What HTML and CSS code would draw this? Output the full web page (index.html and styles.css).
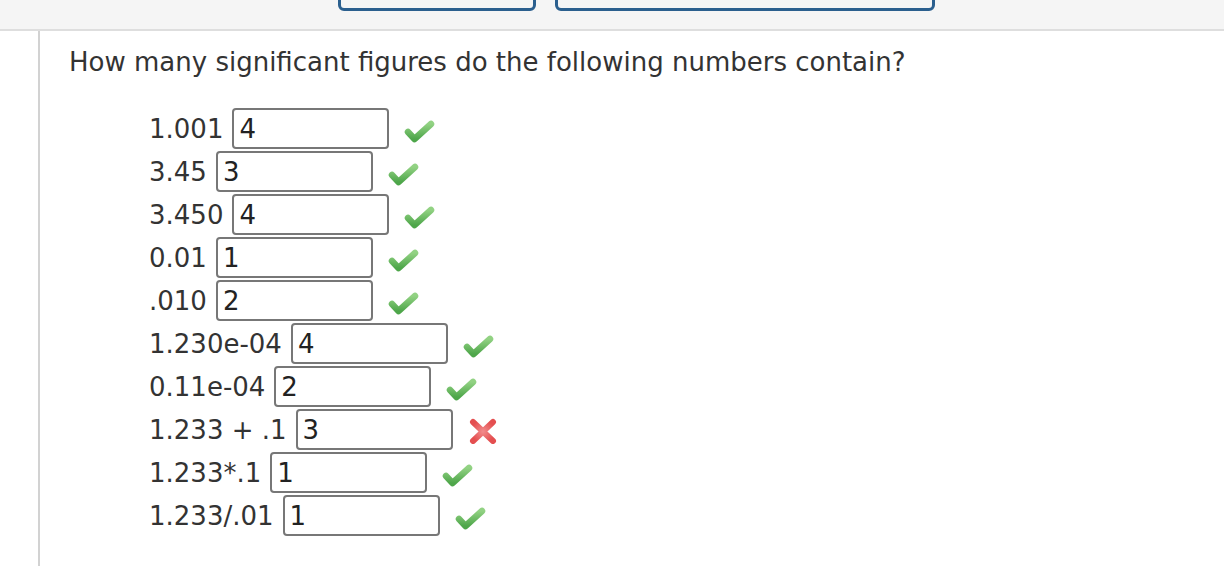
FILE: index.html
```html
<!DOCTYPE html>
<html lang="en">
<head>
  <meta charset="UTF-8">
  <title>Significant Figures</title>
  <link rel="stylesheet" href="styles.css">
</head>
<body>
  <div class="topbar">
    <span class="tab tab-short"></span>
    <span class="tab tab-long"></span>
  </div>

  <div class="main">
    <p class="question">How many significant figures do the following numbers contain?</p>

    <div class="answers">
      <div class="row">
        <span class="label">1.001</span>
        <input type="text" class="answer" value="4">
        <svg class="mark" viewBox="0 0 34 26"><use href="#check"/></svg>
      </div>
      <div class="row">
        <span class="label">3.45</span>
        <input type="text" class="answer" value="3">
        <svg class="mark" viewBox="0 0 34 26"><use href="#check"/></svg>
      </div>
      <div class="row">
        <span class="label">3.450</span>
        <input type="text" class="answer" value="4">
        <svg class="mark" viewBox="0 0 34 26"><use href="#check"/></svg>
      </div>
      <div class="row">
        <span class="label">0.01</span>
        <input type="text" class="answer" value="1">
        <svg class="mark" viewBox="0 0 34 26"><use href="#check"/></svg>
      </div>
      <div class="row">
        <span class="label">.010</span>
        <input type="text" class="answer" value="2">
        <svg class="mark" viewBox="0 0 34 26"><use href="#check"/></svg>
      </div>
      <div class="row">
        <span class="label">1.230e-04</span>
        <input type="text" class="answer" value="4">
        <svg class="mark" viewBox="0 0 34 26"><use href="#check"/></svg>
      </div>
      <div class="row">
        <span class="label">0.11e-04</span>
        <input type="text" class="answer" value="2">
        <svg class="mark" viewBox="0 0 34 26"><use href="#check"/></svg>
      </div>
      <div class="row">
        <span class="label">1.233 + .1</span>
        <input type="text" class="answer" value="3">
        <svg class="mark" viewBox="0 0 34 26"><use href="#cross"/></svg>
      </div>
      <div class="row">
        <span class="label">1.233*.1</span>
        <input type="text" class="answer" value="1">
        <svg class="mark" viewBox="0 0 34 26"><use href="#check"/></svg>
      </div>
      <div class="row">
        <span class="label">1.233/.01</span>
        <input type="text" class="answer" value="1">
        <svg class="mark" viewBox="0 0 34 26"><use href="#check"/></svg>
      </div>
    </div>
  </div>

  <!-- shared icons -->
  <svg class="defs" width="0" height="0">
    <defs>
      <linearGradient id="green" x1="0" y1="0" x2="0" y2="1">
        <stop offset="0" stop-color="#92d283"/>
        <stop offset="1" stop-color="#4ea64a"/>
      </linearGradient>
      <radialGradient id="red" cx="0.5" cy="0.5" r="0.6">
        <stop offset="0" stop-color="#f28d8d"/>
        <stop offset="1" stop-color="#e44f50"/>
      </radialGradient>
      <g id="check">
        <path d="M7 15 L13.5 22 L30 7" fill="none" stroke="url(#green)" stroke-width="6.5" stroke-linecap="round" stroke-linejoin="round"/>
      </g>
      <g id="cross">
        <path d="M8 4 L28 23 M28 4 L8 23" fill="none" stroke="url(#red)" stroke-width="6" stroke-linecap="round"/>
      </g>
    </defs>
  </svg>
</body>
</html>
```

FILE: styles.css
```css
body {
  margin: 0;
  font-family: "DejaVu Sans", Verdana, sans-serif;
  color: #333;
  background-color: #fff;
  overflow: hidden;
}
.topbar {
  display: flex;
  height: 31px;
  background-color: #f5f5f5;
  border-bottom: 2px solid #dedede;
  box-sizing: border-box;
}
.tab {
  display: block;
  height: 22px;
  margin-top: -11px;
  border: 3px solid #2b5f8e;
  border-radius: 6px;
  box-sizing: border-box;
  background-color: #f5f5f5;
}
.tab-short {
  width: 198px;
  margin-left: 338px;
}
.tab-long {
  width: 380px;
  margin-left: 19px;
}
.main {
  margin-left: 38px;
  border-left: 2px solid #d2d2d2;
  padding-left: 29px;
  height: 535px;
  box-sizing: border-box;
}
.question {
  margin: 0;
  padding-top: 16px;
  font-size: 26px;
  line-height: 30px;
}
.answers {
  padding-left: 80px;
  padding-top: 30px;
}
.row {
  display: flex;
  align-items: center;
  height: 43px;
  font-size: 26px;
}
.label {
  margin-right: 9px;
  color: #333;
}
.answer {
  width: 157px;
  height: 41px;
  box-sizing: border-box;
  border: 2px solid #777;
  border-radius: 4px;
  padding: 0 5px;
  font-family: "DejaVu Sans", Verdana, sans-serif;
  font-size: 26px;
  color: #222;
  background-color: #fff;
}
.mark {
  width: 34px;
  height: 26px;
  margin-left: 12px;
  margin-top: 3px;
}
.defs {
  position: absolute;
}
```
